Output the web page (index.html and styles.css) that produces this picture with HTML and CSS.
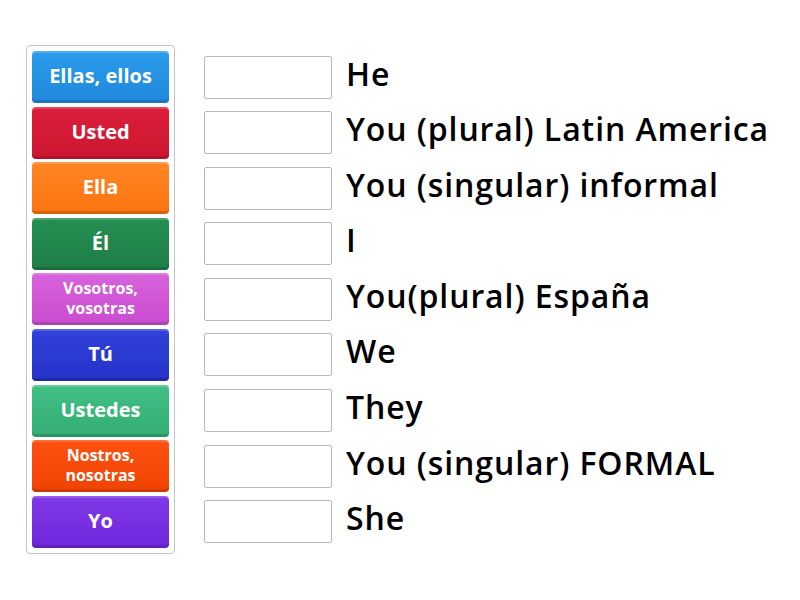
FILE: index.html
```html
<!DOCTYPE html>
<html>
  <head>
    <title>Match up</title>
    <meta name="viewport" content="width=device-width, initial-scale=1.0">
    <link rel="stylesheet" href="styles.css">
  </head>
  <body>
    <div class="board">
      <div class="tile-box">
        <div class="tile tile-blue">Ellas, ellos</div>
        <div class="tile tile-red">Usted</div>
        <div class="tile tile-orange">Ella</div>
        <div class="tile tile-green">Él</div>
        <div class="tile tile-pink small">Vosotros, vosotras</div>
        <div class="tile tile-navy">Tú</div>
        <div class="tile tile-teal">Ustedes</div>
        <div class="tile tile-redorange small">Nostros, nosotras</div>
        <div class="tile tile-purple">Yo</div>
      </div>

      <div class="targets">
        <div class="row"><div class="slot"></div><span class="label">He</span></div>
        <div class="row"><div class="slot"></div><span class="label">You (plural) Latin America</span></div>
        <div class="row"><div class="slot"></div><span class="label">You (singular) informal</span></div>
        <div class="row"><div class="slot"></div><span class="label">I</span></div>
        <div class="row"><div class="slot"></div><span class="label">You(plural) España</span></div>
        <div class="row"><div class="slot"></div><span class="label">We</span></div>
        <div class="row"><div class="slot"></div><span class="label">They</span></div>
        <div class="row"><div class="slot"></div><span class="label">You (singular) FORMAL</span></div>
        <div class="row"><div class="slot"></div><span class="label">She</span></div>
      </div>
    </div>
  </body>
</html>
```

FILE: styles.css
```css
body{
  margin: 0;
  background-color: white;
  font-family: "Open Sans", Arial, sans-serif;
}

.board{
  display: flex;
  align-items: flex-start;
  gap: 29px;
  padding-top: 45px;
  padding-left: 26px;
}

.tile-box{
  display: flex;
  flex-direction: column;
  gap: 3.6px;
  padding: 5px;
  border: 1px solid #c4c4c4;
  border-radius: 4px;
}

.tile{
  width: 137px;
  height: 52px;
  box-sizing: border-box;
  display: flex;
  align-items: center;
  justify-content: center;
  text-align: center;
  border-radius: 4px;
  color: white;
  font-weight: 700;
  font-size: 20px;
  line-height: 22px;
  padding: 0 8px 2px;
  box-shadow: inset 0 2px 0 rgba(255,255,255,0.18), inset 0 -3px 0 rgba(0,0,0,0.14);
}

.small{
  font-size: 16px;
  line-height: 20px;
  padding: 0 20px 3px;
}

.tile-blue{ background: linear-gradient(#2b9cec, #2088dc); }
.tile-red{ background: linear-gradient(#dc1f3a, #cc1631); }
.tile-orange{ background: linear-gradient(#ff8524, #fb7410); }
.tile-green{ background: linear-gradient(#248f53, #1f7d47); }
.tile-pink{ background: linear-gradient(#d862dc, #c94ccf); }
.tile-navy{ background: linear-gradient(#3242da, #2432c8); }
.tile-teal{ background: linear-gradient(#41c084, #34ad73); }
.tile-redorange{ background: linear-gradient(#ff5212, #f04202); }
.tile-purple{ background: linear-gradient(#8039e6, #6f26dc); }

.targets{
  display: flex;
  flex-direction: column;
  gap: 3.6px;
  padding-top: 6px;
}

.row{
  height: 52px;
  display: flex;
  align-items: center;
  gap: 14px;
}

.slot{
  width: 128px;
  height: 43px;
  box-sizing: border-box;
  border: 1px solid #b8b8b8;
  border-radius: 2px;
  background: white;
}

.label{
  font-size: 32px;
  font-weight: 600;
  letter-spacing: 0.9px;
  color: black;
  white-space: nowrap;
  margin-top: -8px;
}
```
